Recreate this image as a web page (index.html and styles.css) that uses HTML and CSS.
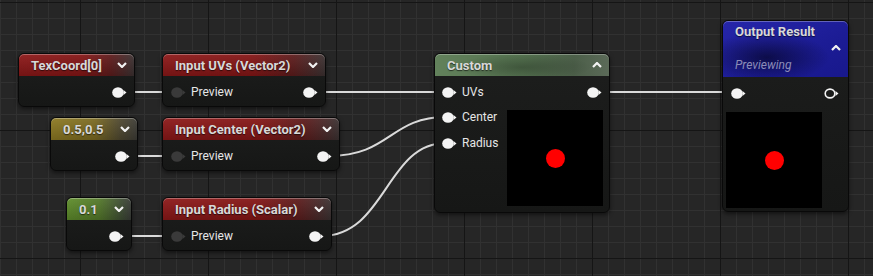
FILE: index.html
```html
<!DOCTYPE html>
<html lang="en">

<head>
    <meta charset="UTF-8" />
    <title>Material Graph</title>
    <link rel="stylesheet" href="styles.css">
</head>

<body>
    <div class="graph">
        <svg class="wires" width="873" height="276" viewBox="0 0 873 276">
            <path d="M124 92 H172" />
            <path d="M314 92 H446" />
            <path d="M598 92 H733" />
            <path d="M127 156 H172" />
            <path d="M329 156 C 390 156 390 117 446 117" />
            <path d="M121 236 H172" />
            <path d="M321 236 C 386 236 386 143 446 143" />
        </svg>

        <!-- constants -->
        <div class="node n-texcoord">
            <div class="head head-red">
                <span class="title">TexCoord[0]</span>
                <svg class="chev" width="10" height="6" viewBox="0 0 10 6"><polyline points="1,1 5,5 9,1" /></svg>
            </div>
            <div class="body end">
                <svg class="pin" width="15" height="11" viewBox="0 0 15 11"><ellipse cx="6" cy="5.5" rx="5.8" ry="5.3" /><polygon points="11.5,3 14.5,5.5 11.5,8" /></svg>
            </div>
        </div>

        <div class="node n-center-val">
            <div class="head head-yellow">
                <span class="title">0.5,0.5</span>
                <svg class="chev" width="10" height="6" viewBox="0 0 10 6"><polyline points="1,1 5,5 9,1" /></svg>
            </div>
            <div class="body end">
                <svg class="pin" width="15" height="11" viewBox="0 0 15 11"><ellipse cx="6" cy="5.5" rx="5.8" ry="5.3" /><polygon points="11.5,3 14.5,5.5 11.5,8" /></svg>
            </div>
        </div>

        <div class="node n-radius-val">
            <div class="head head-green">
                <span class="title">0.1</span>
                <svg class="chev" width="10" height="6" viewBox="0 0 10 6"><polyline points="1,1 5,5 9,1" /></svg>
            </div>
            <div class="body end">
                <svg class="pin" width="15" height="11" viewBox="0 0 15 11"><ellipse cx="6" cy="5.5" rx="5.8" ry="5.3" /><polygon points="11.5,3 14.5,5.5 11.5,8" /></svg>
            </div>
        </div>

        <!-- function inputs -->
        <div class="node n-in-uvs">
            <div class="head head-red">
                <span class="title">Input UVs (Vector2)</span>
                <svg class="chev" width="10" height="6" viewBox="0 0 10 6"><polyline points="1,1 5,5 9,1" /></svg>
            </div>
            <div class="body">
                <svg class="pin pin-off" width="15" height="11" viewBox="0 0 15 11"><ellipse cx="6" cy="5.5" rx="5.8" ry="5.3" /><polygon points="11.5,3 14.5,5.5 11.5,8" /></svg>
                <span class="label">Preview</span>
                <svg class="pin push" width="15" height="11" viewBox="0 0 15 11"><ellipse cx="6" cy="5.5" rx="5.8" ry="5.3" /><polygon points="11.5,3 14.5,5.5 11.5,8" /></svg>
            </div>
        </div>

        <div class="node n-in-center">
            <div class="head head-red">
                <span class="title">Input Center (Vector2)</span>
                <svg class="chev" width="10" height="6" viewBox="0 0 10 6"><polyline points="1,1 5,5 9,1" /></svg>
            </div>
            <div class="body">
                <svg class="pin pin-off" width="15" height="11" viewBox="0 0 15 11"><ellipse cx="6" cy="5.5" rx="5.8" ry="5.3" /><polygon points="11.5,3 14.5,5.5 11.5,8" /></svg>
                <span class="label">Preview</span>
                <svg class="pin push" width="15" height="11" viewBox="0 0 15 11"><ellipse cx="6" cy="5.5" rx="5.8" ry="5.3" /><polygon points="11.5,3 14.5,5.5 11.5,8" /></svg>
            </div>
        </div>

        <div class="node n-in-radius">
            <div class="head head-red">
                <span class="title">Input Radius (Scalar)</span>
                <svg class="chev" width="10" height="6" viewBox="0 0 10 6"><polyline points="1,1 5,5 9,1" /></svg>
            </div>
            <div class="body">
                <svg class="pin pin-off" width="15" height="11" viewBox="0 0 15 11"><ellipse cx="6" cy="5.5" rx="5.8" ry="5.3" /><polygon points="11.5,3 14.5,5.5 11.5,8" /></svg>
                <span class="label">Preview</span>
                <svg class="pin push" width="15" height="11" viewBox="0 0 15 11"><ellipse cx="6" cy="5.5" rx="5.8" ry="5.3" /><polygon points="11.5,3 14.5,5.5 11.5,8" /></svg>
            </div>
        </div>

        <!-- custom node -->
        <div class="node n-custom">
            <div class="head head-custom">
                <span class="title">Custom</span>
                <svg class="chev" width="10" height="6" viewBox="0 0 10 6"><polyline points="1,5 5,1 9,5" /></svg>
            </div>
            <div class="custom-body">
                <div class="row">
                    <svg class="pin" width="15" height="11" viewBox="0 0 15 11"><ellipse cx="6" cy="5.5" rx="5.8" ry="5.3" /><polygon points="11.5,3 14.5,5.5 11.5,8" /></svg>
                    <span class="label">UVs</span>
                    <svg class="pin push" width="15" height="11" viewBox="0 0 15 11"><ellipse cx="6" cy="5.5" rx="5.8" ry="5.3" /><polygon points="11.5,3 14.5,5.5 11.5,8" /></svg>
                </div>
                <div class="lower">
                    <div class="inputs">
                        <div class="row">
                            <svg class="pin" width="15" height="11" viewBox="0 0 15 11"><ellipse cx="6" cy="5.5" rx="5.8" ry="5.3" /><polygon points="11.5,3 14.5,5.5 11.5,8" /></svg>
                            <span class="label">Center</span>
                        </div>
                        <div class="row">
                            <svg class="pin" width="15" height="11" viewBox="0 0 15 11"><ellipse cx="6" cy="5.5" rx="5.8" ry="5.3" /><polygon points="11.5,3 14.5,5.5 11.5,8" /></svg>
                            <span class="label">Radius</span>
                        </div>
                    </div>
                    <div class="preview"><div class="dot"></div></div>
                </div>
            </div>
        </div>

        <!-- output -->
        <div class="node n-output">
            <div class="head-output">
                <span class="title">Output Result</span>
                <div class="chev-row">
                    <svg class="chev" width="10" height="6" viewBox="0 0 10 6"><polyline points="1,5 5,1 9,5" /></svg>
                </div>
                <span class="sub">Previewing</span>
            </div>
            <div class="out-body">
                <div class="row">
                    <svg class="pin" width="15" height="11" viewBox="0 0 15 11"><ellipse cx="6" cy="5.5" rx="5.8" ry="5.3" /><polygon points="11.5,3 14.5,5.5 11.5,8" /></svg>
                    <svg class="pin pin-ring push" width="15" height="11" viewBox="0 0 15 11"><ellipse cx="6" cy="5.5" rx="4.8" ry="4.4" /><polygon points="11.5,3 14.5,5.5 11.5,8" /></svg>
                </div>
                <div class="preview"><div class="dot"></div></div>
            </div>
        </div>
    </div>
</body>

</html>
```

FILE: styles.css
```css
:root {
    --bg: #262626;
    --grid: #313131;
    --grid-major: #151515;
    --node: #1a1b1a;
    --wire: #dadada;
    --text: #e6e6e6;
}

* {
    margin: 0;
    padding: 0;
    box-sizing: border-box;
    font-family: Roboto, 'Liberation Sans', sans-serif;
}

body {
    width: 873px;
    height: 276px;
    overflow: hidden;
    background: var(--bg);
}

.graph {
    position: relative;
    width: 873px;
    height: 276px;
    background-color: var(--bg);
    background-image:
        linear-gradient(to right, var(--grid-major) 1px, transparent 1px),
        linear-gradient(to bottom, var(--grid-major) 1px, transparent 1px),
        linear-gradient(to right, var(--grid) 1px, transparent 1px),
        linear-gradient(to bottom, var(--grid) 1px, transparent 1px);
    background-size: 128px 128px, 128px 128px, 16px 16px, 16px 16px;
    background-position: 80px 2px, 80px 2px, 0 2px, 0 2px;
}

.wires {
    position: absolute;
    left: 0;
    top: 0;
}

.wires path {
    fill: none;
    stroke: var(--wire);
    stroke-width: 2;
}

/* nodes */
.node {
    position: absolute;
    background: linear-gradient(to bottom, #1d1e1d, #161716);
    border: 1px solid #090909;
    border-radius: 6px;
    box-shadow: 0 2px 4px rgba(0, 0, 0, 0.5);
    color: var(--text);
}

.n-texcoord { left: 18px; top: 53px; width: 117px; height: 54px; }
.n-center-val { left: 50px; top: 117px; width: 88px; height: 54px; }
.n-radius-val { left: 66px; top: 197px; width: 66px; height: 54px; }
.n-in-uvs { left: 162px; top: 53px; width: 164px; height: 54px; }
.n-in-center { left: 162px; top: 117px; width: 178px; height: 54px; }
.n-in-radius { left: 162px; top: 197px; width: 170px; height: 54px; }
.n-custom { left: 434px; top: 53px; width: 176px; height: 160px; }
.n-output { left: 722px; top: 20px; width: 127px; height: 192px; }

.head {
    height: 22px;
    display: flex;
    align-items: center;
    justify-content: space-between;
    padding: 0 7px 0 12px;
    border-radius: 5px 5px 0 0;
    box-shadow: inset 0 1px 0 rgba(255, 255, 255, 0.3);
}

.title {
    font-size: 13px;
    font-weight: 700;
    color: #d8d8d8;
    text-shadow: 0 1px 1px rgba(0, 0, 0, 0.6);
    white-space: nowrap;
}

.chev {
    flex: none;
}

.chev polyline {
    fill: none;
    stroke: #f2f2f2;
    stroke-width: 2.2;
}

.head-red {
    background:
        linear-gradient(to bottom, rgba(255, 255, 255, 0.06), rgba(0, 0, 0, 0.18)),
        linear-gradient(to right, #8d1818 0%, #861616 55%, #5e1c1c 80%, #3c3232 100%);
}

.head-yellow {
    background:
        linear-gradient(to bottom, rgba(255, 255, 255, 0.06), rgba(0, 0, 0, 0.18)),
        linear-gradient(to right, #8e7a22 0%, #7c6b22 50%, #504930 80%, #3d3c36 100%);
}

.head-green {
    background:
        linear-gradient(to bottom, rgba(255, 255, 255, 0.06), rgba(0, 0, 0, 0.18)),
        linear-gradient(to right, #5f8e2b 0%, #54792a 50%, #3f4e34 85%, #3a3d38 100%);
}

.head-custom {
    background:
        radial-gradient(ellipse 40% 60% at 50% 60%, rgba(0, 0, 0, 0.25), transparent),
        linear-gradient(to right, #62815b 0%, #557350 50%, #4c5f49 80%, #5b6a58 100%);
}

/* pins */
.pin {
    flex: none;
    fill: #f4f4f4;
}

.pin-off {
    fill: #3a3a3a;
}

.pin-ring ellipse {
    fill: #1a1b1a;
    stroke: #f4f4f4;
    stroke-width: 1.6;
}

.push {
    margin-left: auto;
}

.label {
    font-size: 12px;
    color: var(--text);
    margin-left: 5px;
    white-space: nowrap;
}

.body {
    height: 30px;
    display: flex;
    align-items: center;
    padding: 2px 7px 0 8px;
}

.body.end {
    justify-content: flex-end;
}

/* custom node */
.custom-body {
    padding: 4px 7px 0 7px;
}

.row {
    display: flex;
    align-items: center;
    height: 24px;
}

.lower {
    display: flex;
    justify-content: space-between;
}

.inputs .row {
    height: 26px;
}

.preview {
    width: 96px;
    height: 96px;
    background: #000;
    display: flex;
    align-items: center;
    justify-content: center;
}

.lower .preview {
    margin-top: 6px;
    margin-right: -1px;
}

.dot {
    width: 19px;
    height: 19px;
    border-radius: 50%;
    background: #ff0000;
}

/* output node */
.head-output {
    height: 56px;
    display: flex;
    flex-direction: column;
    padding: 4px 7px 0 12px;
    border-radius: 5px 5px 0 0;
    box-shadow: inset 0 1px 0 rgba(255, 255, 255, 0.3);
    background:
        radial-gradient(ellipse 50% 45% at 35% 65%, rgba(5, 5, 40, 0.7), transparent),
        linear-gradient(to bottom right, #2626aa, #1c1c95 60%, #18188c);
}

.head-output .title {
    line-height: 14px;
}

.chev-row {
    display: flex;
    justify-content: flex-end;
    align-items: center;
    height: 18px;
}

.sub {
    font-size: 12px;
    font-style: italic;
    color: #8c8cb8;
    line-height: 16px;
}

.out-body {
    padding: 4px 0 0 3px;
}

.out-body .row {
    padding: 0 9px 0 5px;
}

.out-body .preview {
    margin-top: 7px;
}
```
